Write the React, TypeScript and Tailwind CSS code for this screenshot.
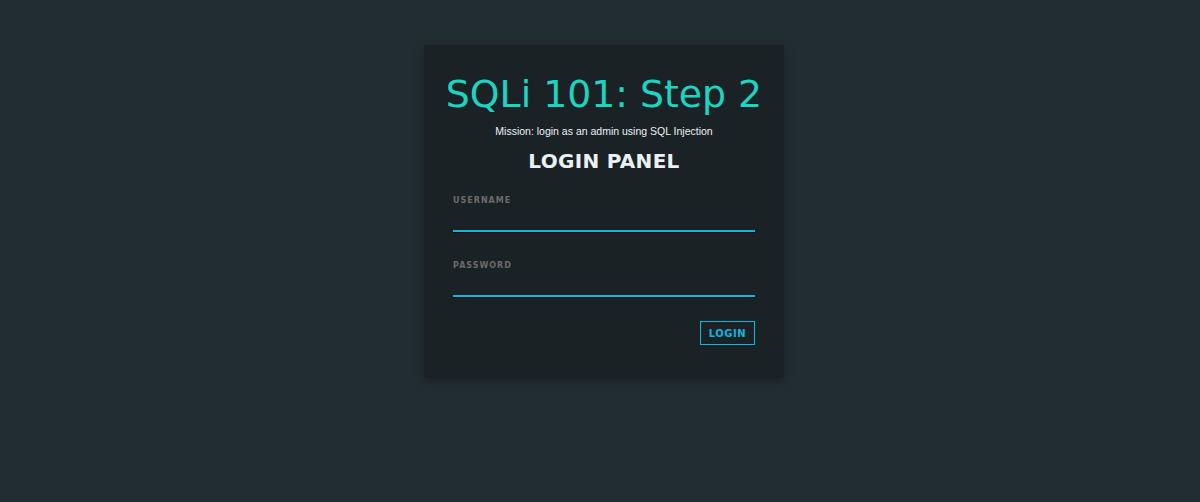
import React from 'react'

function Field({ label, type }: { label: string; type: string }) {
  return (
    <div className="flex flex-col">
      <label className="text-[8px] leading-[10px] font-bold tracking-[1px] text-[#6c6c6c] font-['DejaVu_Sans',sans-serif]">
        {label}
      </label>
      <div className="h-[26px] border-b-2 border-[#0db8de] shadow-[0_1px_0_#0a0f12]">
        <input
          type={type}
          className="w-full h-full bg-transparent outline-none text-[#ecf0f5] text-sm font-['DejaVu_Sans',sans-serif]"
        />
      </div>
    </div>
  )
}

export default function App() {
  return (
    <div className="min-h-[502px] bg-[#222d32] flex justify-center pl-2 pt-[45px]">
      <div className="w-[360px] h-[333px] bg-[#1a2226] shadow-[0_4px_10px_rgba(0,0,0,0.25)] pt-[27px] px-[29px] flex flex-col">
        <h1 className="-mx-[29px] whitespace-nowrap text-center text-[37.8px] leading-[44px] text-[#1fd3c1] font-['DejaVu_Sans',sans-serif]">
          SQLi 101: Step 2
        </h1>
        <p className="mt-[7px] text-center text-[10.5px] leading-[16px] text-[#ecf0f5] font-['Liberation_Sans',Arial,sans-serif]">
          Mission: login as an admin using SQL Injection
        </p>
        <h2 className="mt-[10px] text-center text-[20px] leading-[24px] font-bold tracking-[0.3px] text-[#ecf0f5] font-['DejaVu_Sans',sans-serif]">
          LOGIN PANEL
        </h2>
        <form className="mt-[23px] flex flex-col gap-[29px]" onSubmit={(e) => e.preventDefault()}>
          <Field label="USERNAME" type="text" />
          <Field label="PASSWORD" type="password" />
          <div className="-mt-[5px] flex justify-end">
            <button
              type="submit"
              className="w-[55px] h-[24px] border border-[#0db8de] text-[#0db8de] text-[10px] font-bold tracking-[0.5px] font-['DejaVu_Sans',sans-serif]"
            >
              LOGIN
            </button>
          </div>
        </form>
      </div>
    </div>
  )
}
